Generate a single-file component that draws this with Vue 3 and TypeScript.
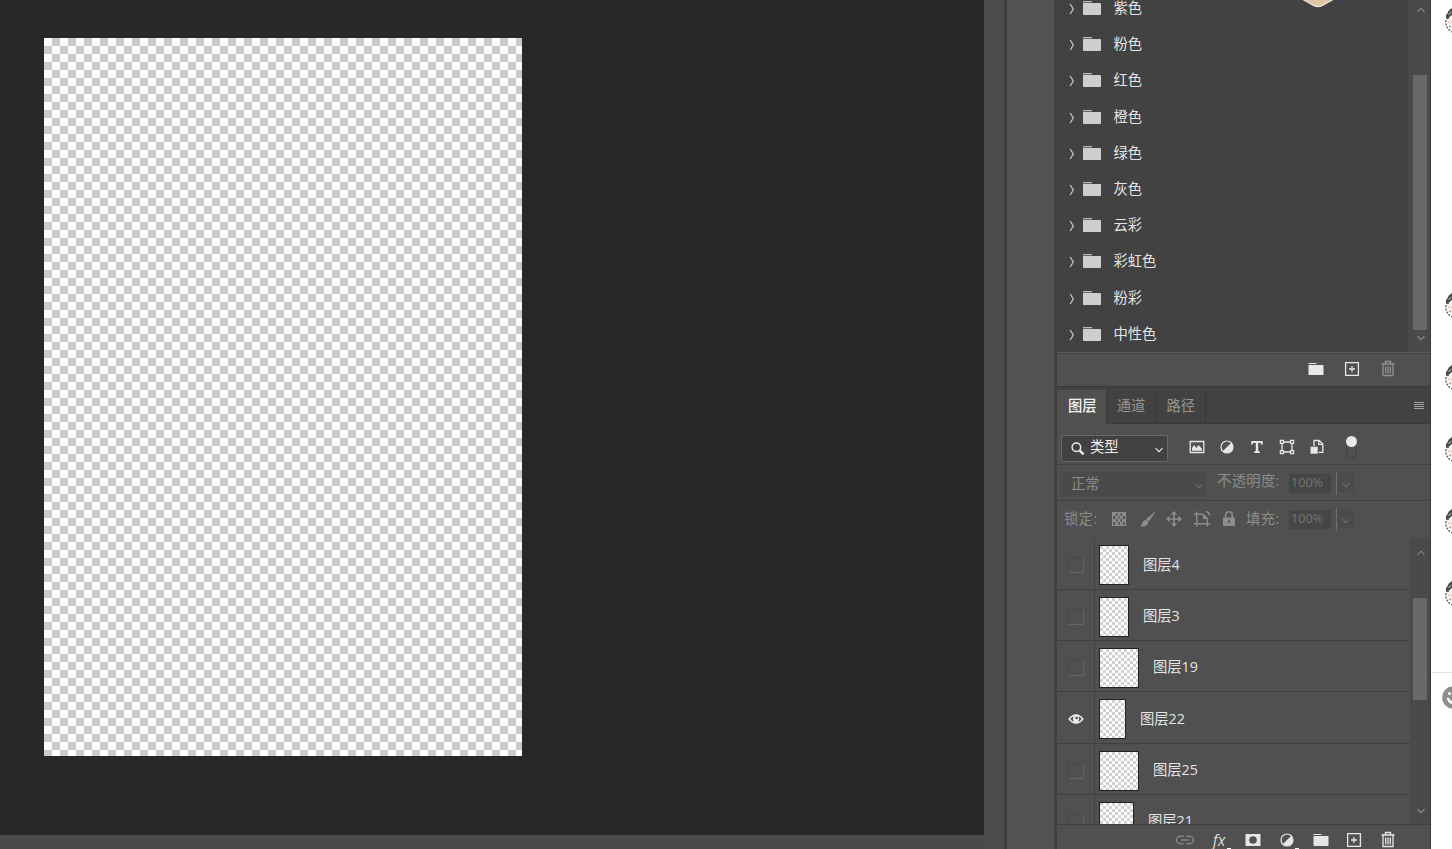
<script setup lang="ts">
interface Layer {
  name: string
  width: number
  visible: boolean
}

const swatchGroups: string[] = ['紫色', '粉色', '红色', '橙色', '绿色', '灰色', '云彩', '彩虹色', '粉彩', '中性色']

const layers: Layer[] = [
  { name: '图层4', width: 30, visible: false },
  { name: '图层3', width: 30, visible: false },
  { name: '图层19', width: 40, visible: false },
  { name: '图层22', width: 27, visible: true },
  { name: '图层25', width: 40, visible: false },
  { name: '图层21', width: 35, visible: false },
]

const filterIcons: string[] = ['image', 'adjust', 'type', 'shape', 'smart']
const layerActions: string[] = ['link', 'fx', 'mask', 'adjust', 'folder', 'plus', 'trash']
const avatars: number[] = [1, 2, 3, 4, 5, 6]
</script>

<template>
  <div class="screen">
    <svg class="defs" aria-hidden="true">
      <symbol id="folder" viewBox="0 0 18 18">
        <path d="M1.5 3h8v1h-8z" fill="currentColor" />
        <path d="M1.5 5h14.2q.8 0 .8.8v8.4q0 .8-.8.8H2.3q-.8 0-.8-.8z" fill="currentColor" />
      </symbol>
      <symbol id="plus" viewBox="0 0 18 18">
        <path d="M2.6 2.6h12.8v12.8H2.6zM9 6v6M6 9h6" fill="none" stroke="currentColor" stroke-width="1.3" />
      </symbol>
      <symbol id="trash" viewBox="0 0 18 18">
        <path d="M2.5 4h13M6.5 3.5v-2h5v2M4 4.5V15.5h10V4.5" fill="none" stroke="currentColor" stroke-width="1.3" />
        <path d="M6.7 6.5v7M9 6.5v7M11.3 6.5v7" stroke="currentColor" stroke-width="1.3" />
      </symbol>
      <symbol id="image" viewBox="0 0 18 18">
        <path d="M2.2 3.5h13.6v11H2.2z" fill="none" stroke="currentColor" stroke-width="1.3" />
        <path d="M4 12.8V10l2.2-3 2 3 2.2-3 3.6 3.8v2z" fill="currentColor" />
      </symbol>
      <symbol id="adjust" viewBox="0 0 18 18">
        <circle cx="9" cy="9" r="6" fill="none" stroke="currentColor" stroke-width="1.2" />
        <path d="M13.3 4.7A6 6 0 1 1 4.7 13.3z" fill="currentColor" />
      </symbol>
      <symbol id="type" viewBox="0 0 18 18">
        <path d="M3.3 3h11.4v3.8h-1.3l-.5-1.9H10.2v8.2l1.7.6v1.3H6.1v-1.3l1.7-.6V4.9H5.1l-.5 1.9H3.3z" fill="currentColor" />
      </symbol>
      <symbol id="shape" viewBox="0 0 18 18">
        <path d="M4 6v6M14 6v6M6 4h6M6 14h6M2.4 2.4h3v3h-3zM12.6 2.4h3v3h-3zM2.4 12.6h3v3h-3zM12.6 12.6h3v3h-3z" fill="none" stroke="currentColor" stroke-width="1.3" />
      </symbol>
      <symbol id="smart" viewBox="0 0 18 18">
        <path d="M6 8V2.5h5.2L14.8 6v8.3H10.5M10.8 2.5v3.8h4" fill="none" stroke="currentColor" stroke-width="1.3" />
        <path d="M2.5 8.7h7.2v7H2.5z" fill="currentColor" />
      </symbol>
      <symbol id="search" viewBox="0 0 18 18">
        <circle cx="7.4" cy="7.2" r="4.3" fill="none" stroke="currentColor" stroke-width="1.5" />
        <path d="M10.6 10.4l4 4" stroke="currentColor" stroke-width="2.4" />
      </symbol>
      <symbol id="checker" viewBox="0 0 18 18">
        <path d="M2.6 2.6h12.8v12.8H2.6z" fill="none" stroke="currentColor" stroke-width="1.3" />
        <path d="M3 3h3v3H3zM12 3h3v3h-3zM7.5 3h3v3h-3zM5.3 6h3v3h-3zM9.8 6h3v3h-3zM3 9h3v3H3zM7.5 8.5h3v3.5h-3zM12 9h3v3h-3zM5.3 12h3v3h-3zM9.8 12h3v3h-3z" fill="currentColor" />
      </symbol>
      <symbol id="brush" viewBox="0 0 18 18">
        <path d="M17.3.8L7 9l2.7 2.7zM6.4 10c1.7.3 2.8 1.4 2.7 3-.2 2.5-3 4-8.1 3.5 2.5-1.2 1.8-5.8 5.4-6.5z" fill="currentColor" />
      </symbol>
      <symbol id="move" viewBox="0 0 18 18">
        <path d="M9 1l3.2 3.6H9.8v3.6h3.6V5.8L17 9l-3.6 3.2V9.8H9.8v3.6h2.4L9 17l-3.2-3.6h2.4V9.8H4.6v2.4L1 9l3.6-3.2v2.4h3.6V4.6H5.8z" fill="currentColor" />
      </symbol>
      <symbol id="artboard" viewBox="0 0 18 18">
        <path d="M3.8 1.5v15M.8 4.3h9.4M.8 13.7h16.4M14.2 8.3v8.2M10.2 4.3l4 4M13 1.5q3 .3 3.8 3.8" fill="none" stroke="currentColor" stroke-width="1.4" />
        <path d="M10 4v5h5z" fill="currentColor" />
      </symbol>
      <symbol id="lock" viewBox="0 0 18 18">
        <path d="M5.7 8V5a3.3 3.3 0 0 1 6.6 0v3" fill="none" stroke="currentColor" stroke-width="1.6" />
        <path fill-rule="evenodd" d="M3 7.5h12V16H3zM8.2 10v3h1.6v-3z" fill="currentColor" />
      </symbol>
      <symbol id="link" viewBox="0 0 18 18">
        <path d="M7.7 5.3H4.2a3.7 3.7 0 0 0 0 7.4h3.5M10.3 5.3h3.5a3.7 3.7 0 0 1 0 7.4h-3.5M5.2 9h7.6" fill="none" stroke="currentColor" stroke-width="1.4" />
      </symbol>
      <symbol id="mask" viewBox="0 0 18 18">
        <path fill-rule="evenodd" d="M1.5 3h15v12h-15zM9 5.2a3.8 3.8 0 1 0 0 7.6a3.8 3.8 0 1 0 0-7.6z" fill="currentColor" />
      </symbol>
      <symbol id="eye" viewBox="0 0 18 18">
        <path fill-rule="evenodd" d="M1.2 9Q4.6 4.2 9 4.2T16.8 9Q13.4 13.8 9 13.8T1.2 9zM3.3 9q1.4 2 3.2 2.8-1.2-2.8 0-5.6Q4.7 7 3.3 9zM14.7 9q-1.4-2-3.2-2.8 1.2 2.8 0 5.6Q13.3 11 14.7 9z" fill="currentColor" />
        <circle cx="9.6" cy="8" r="1.3" fill="#505050" />
      </symbol>
      <symbol id="down" viewBox="0 0 10 10">
        <path d="M1.5 3.2L5 6.7l3.5-3.5" fill="none" stroke="currentColor" stroke-width="1.1" />
      </symbol>
      <symbol id="up" viewBox="0 0 10 10">
        <path d="M1.5 6.7L5 3.2l3.5 3.5" fill="none" stroke="currentColor" stroke-width="1.1" />
      </symbol>
    </svg>

    <main class="workspace">
      <div class="pasteboard"><div class="document"></div></div>
      <div class="hscroll"></div>
    </main>
    <div class="vscroll"></div>
    <div class="dock"></div>

    <aside class="panels">
      <section class="swatches">
        <ul class="groups">
          <li v-for="group in swatchGroups" :key="group" class="group">
            <svg class="chevron" viewBox="0 0 6 12"><path d="M1.2 1L4.3 6 1.2 11" fill="none" stroke="currentColor" stroke-width="1.3" /></svg>
            <svg class="group-folder" viewBox="0 0 18 14">
              <path d="M0 0h9v1.3H0z" fill="#bcbcbc" />
              <path d="M0 2h17.2q.8 0 .8.8v10.4q0 .8-.8.8H.8q-.8 0-.8-.8z" fill="#cecece" />
            </svg>
            <span>{{ group }}</span>
          </li>
        </ul>
        <div class="track">
          <svg class="arrow"><use href="#up" /></svg>
          <div class="thumb swatch-thumb"></div>
          <svg class="arrow"><use href="#down" /></svg>
        </div>
        <svg class="badge" viewBox="0 0 34 9">
          <path d="M1 0L13 6.6q4 2 8 0L33 0z" fill="#dcc6a4" stroke="#efe4d2" stroke-width="1.2" />
        </svg>
      </section>

      <div class="swatch-actions">
        <span class="cell"><svg class="icon"><use href="#folder" /></svg></span>
        <span class="cell"><svg class="icon"><use href="#plus" /></svg></span>
        <span class="cell dim"><svg class="icon"><use href="#trash" /></svg></span>
      </div>

      <nav class="tabs">
        <span class="tab active">图层</span>
        <span class="tab">通道</span>
        <span class="tab">路径</span>
        <span class="menu"></span>
      </nav>

      <div class="filter">
        <div class="kind">
          <svg class="icon search"><use href="#search" /></svg>
          <span>类型</span>
          <svg class="caret"><use href="#down" /></svg>
        </div>
        <div class="kinds">
          <span v-for="icon in filterIcons" :key="icon" class="cell"><svg class="icon"><use :href="'#' + icon" /></svg></span>
        </div>
        <div class="toggle"></div>
      </div>

      <div class="blend">
        <div class="mode"><span>正常</span><svg class="caret"><use href="#down" /></svg></div>
        <span class="label">不透明度:</span>
        <span class="amount">100%</span>
        <span class="drop"><svg class="caret"><use href="#down" /></svg></span>
      </div>

      <div class="locks">
        <span class="label lock-label">锁定:</span>
        <svg class="icon lock-checker"><use href="#checker" /></svg>
        <svg class="icon lock-brush"><use href="#brush" /></svg>
        <svg class="icon lock-move"><use href="#move" /></svg>
        <svg class="icon lock-artboard"><use href="#artboard" /></svg>
        <svg class="icon lock-all"><use href="#lock" /></svg>
        <span class="label fill-label">填充:</span>
        <span class="amount">100%</span>
        <span class="drop"><svg class="caret"><use href="#down" /></svg></span>
      </div>

      <section class="layers">
        <ul class="rows">
          <li v-for="layer in layers" :key="layer.name" class="row">
            <span class="vis">
              <svg v-if="layer.visible" class="icon eye"><use href="#eye" /></svg>
              <span v-else class="box"></span>
            </span>
            <span class="preview" :style="{ width: layer.width + 'px' }"></span>
            <span class="name">{{ layer.name }}</span>
          </li>
        </ul>
        <div class="track layer-track">
          <svg class="arrow"><use href="#up" /></svg>
          <div class="thumb layer-thumb"></div>
          <svg class="arrow last"><use href="#down" /></svg>
        </div>
      </section>

      <footer class="layer-actions">
        <span v-for="action in layerActions" :key="action" class="cell" :class="action">
          <span v-if="action === 'fx'" class="fx-text">fx</span>
          <svg v-else class="icon"><use :href="'#' + action" /></svg>
        </span>
      </footer>
    </aside>

    <div class="chat">
      <svg v-for="avatar in avatars" :key="avatar" class="avatar" viewBox="0 0 7 26">
        <path d="M7 1Q3 3 2.2 7L1 7.5v4l2.2 1L4.6 10 7 8z" fill="#4e4e4e" />
        <path d="M3.6 8l2.6-3" stroke="#c4c4c4" />
        <path d="M3 12l4-1v11Q2 18 3 12z" fill="#f5eee9" />
        <path d="M1 13q-1 8 6 12" fill="none" stroke="#666" stroke-width="1.4" stroke-dasharray="2 1.3" />
        <path d="M3 15h4" stroke="#dfb5a0" stroke-dasharray="1.5 1" />
        <path d="M4 19l2 1" stroke="#777" />
      </svg>
      <div class="compose">
        <svg class="smile" viewBox="0 0 10 23">
          <circle cx="11.5" cy="11.5" r="11.3" fill="#8f8f8f" />
          <circle cx="7.5" cy="7.5" r="1.5" fill="#fff" />
          <path d="M4.8 12q.7 5 5.2 6v-3q-2.5-.5-3-3z" fill="#fff" />
        </svg>
      </div>
    </div>
  </div>
</template>

<style>
body {
  margin: 0;
  overflow: hidden;
}
</style>

<style scoped>
* {
  box-sizing: border-box;
}
.screen {
  position: relative;
  display: flex;
  width: 1452px;
  height: 849px;
  overflow: hidden;
  background: #505050;
  color: #e4e4e4;
  font-family: "Open Sans", "Noto Sans CJK SC", sans-serif;
  font-size: 14.3px;
  font-weight: 400;
  line-height: 20px;
}
.defs {
  position: absolute;
  width: 0;
  height: 0;
}
svg {
  display: block;
  flex: none;
}
ul {
  margin: 0;
  padding: 0;
  list-style: none;
}
.icon {
  width: 18px;
  height: 18px;
}
.caret {
  width: 10px;
  height: 10px;
}
.cell {
  display: flex;
  flex: none;
  align-items: center;
  justify-content: center;
}

.workspace {
  width: 984px;
  flex: none;
}
.pasteboard {
  height: 835px;
  padding: 38px 0 0 44px;
  background: #282828;
}
.document {
  width: 478px;
  height: 718px;
  background: conic-gradient(#fff 25%, #cbcbcb 0 50%, #fff 0 75%, #cbcbcb 0) 8px 0 / 16px 16px;
}
.hscroll {
  height: 14px;
  background: #4a4a4a;
}
.vscroll {
  width: 23px;
  flex: none;
  background: #4b4b4b;
  border-right: 3px solid #3e3e3e;
}
.dock {
  width: 50px;
  flex: none;
  background: #525252;
  border-right: 3px solid #414141;
}
.panels {
  display: flex;
  width: 374px;
  flex: none;
  flex-direction: column;
  border-right: 1px solid #3a3a3a;
}

.swatches {
  position: relative;
  display: flex;
  height: 352px;
  flex: none;
  overflow: hidden;
}
.groups {
  width: 351px;
  margin-top: -10px;
  background: #424242;
}
.group {
  display: flex;
  height: 36.2px;
  padding-left: 12px;
  align-items: center;
}
.group span {
  padding-left: 0.5px;
}
.chevron {
  width: 6px;
  height: 12px;
  margin: 2px 8px 0 0;
  color: #c4c4c4;
}
.group-folder {
  width: 18px;
  height: 14px;
  margin-right: 12px;
}
.badge {
  position: absolute;
  top: -1px;
  left: 244px;
  width: 34px;
  height: 9px;
}
.track {
  display: flex;
  width: 22px;
  padding: 5px 0 0 5px;
  flex-direction: column;
  background: #4a4a4a;
  color: #8c8c8c;
}
.arrow {
  width: 10px;
  height: 10px;
  margin-left: 3px;
}
.thumb {
  width: 14px;
  background: #696968;
  border-radius: 1px;
}
.swatch-thumb {
  height: 255px;
  margin: 60px 0 3px;
}
.swatch-actions {
  display: flex;
  height: 34px;
  flex: none;
  padding: 0 0 2px 240.5px;
  border-top: 1px solid #5b5b5b;
  color: #e8e8e8;
  box-shadow: inset 0 1px #454545;
}
.swatch-actions .cell {
  width: 36px;
}
.swatch-actions .dim {
  color: #929292;
}

.tabs {
  display: flex;
  height: 38px;
  flex: none;
  padding-top: 3px;
  background: #424242;
  border-top: 1px solid #383838;
  border-bottom: 1px solid #3a3a3a;
  color: #959595;
}
.tab {
  width: 49.7px;
  padding-top: 6px;
  border-right: 1px solid #393939;
  text-align: center;
}
.tab.active {
  height: 35px;
  padding-left: 2px;
  background: #505050;
  color: #f2f2f2;
  font-weight: 500;
}
.menu {
  width: 10px;
  height: 7px;
  margin: 12px 6px 0 auto;
  background: repeating-linear-gradient(#a0a0a0 0 1px, transparent 1px 2px);
}

.filter {
  display: flex;
  height: 41px;
  flex: none;
  border-bottom: 1px solid #424242;
}
.kind {
  display: flex;
  width: 107px;
  height: 27px;
  margin: 11px 0 0 4px;
  padding: 0 3px 0 7px;
  align-items: center;
  background: #424242;
  border: 1px solid #686868;
  border-radius: 2px;
  color: #ededed;
}
.kind span {
  margin: -3px auto 0 3px;
}
.kind .caret {
  margin-top: 2px;
}
.kinds {
  display: flex;
  height: 30px;
  margin: 8px 0 0 13.5px;
  color: #e6e6e6;
}
.kinds .cell {
  width: 30.2px;
}
.toggle {
  width: 11px;
  height: 23px;
  margin: 12px 0 0 13.5px;
  border: 1px solid #424242;
  border-top: 0;
  border-radius: 6px;
}
.toggle::before {
  display: block;
  width: 11px;
  height: 11px;
  margin-left: -1px;
  background: #e8e8e8;
  border-radius: 50%;
  content: "";
}

.blend {
  display: flex;
  height: 36px;
  flex: none;
  border-bottom: 1px solid #424242;
  color: #8c8c8c;
}
.mode {
  display: flex;
  width: 144px;
  height: 25px;
  margin: 7px 0 0 5px;
  padding: 0 2px 2px 9px;
  align-items: center;
  justify-content: space-between;
  background: #4a4a4a;
  border-radius: 2px;
}
.mode .caret,
.drop .caret {
  margin-top: 4px;
  color: #6e6e6e;
}
.label {
  white-space: nowrap;
}
.blend .label {
  width: 83px;
  margin-top: 6px;
  padding-left: 11px;
  letter-spacing: 0.35px;
}
.amount {
  width: 42px;
  height: 19px;
  margin-top: 8.5px;
  padding-left: 2px;
  background: #464646;
  color: #757575;
  font-size: 12.6px;
  line-height: 18px;
}
.drop {
  display: flex;
  width: 18px;
  height: 23px;
  margin: 7px 0 0 5px;
  align-items: center;
  justify-content: center;
  border-left: 1px solid #707070;
  background: linear-gradient(#4b4b4b, #4b4b4b) 0 1px / 100% 19px no-repeat;
}
.drop .caret {
  margin-top: 2px;
}
.locks {
  display: flex;
  height: 37px;
  flex: none;
  color: #8c8c8c;
}
.locks .icon {
  margin-top: 9px;
}
.lock-label {
  width: 46px;
  margin-top: 8px;
  padding-left: 7px;
  letter-spacing: 0.5px;
}
.locks .lock-checker {
  margin-left: 7px;
}
.locks .lock-brush {
  margin-left: 11px;
}
.locks .lock-move {
  margin-left: 8px;
}
.locks .lock-artboard {
  margin-left: 10px;
}
.locks .lock-all {
  margin-left: 9px;
}
.fill-label {
  width: 43px;
  margin: 8px 0 0 8px;
  letter-spacing: 0.5px;
}

.layers {
  display: flex;
  height: 286px;
  flex: none;
  overflow: hidden;
}
.rows {
  width: 353px;
  flex: none;
}
.row {
  display: flex;
  height: 51.3px;
  border-bottom: 1px solid #404040;
}
.row:first-child {
  height: 51.7px;
}
.vis {
  width: 38px;
  flex: none;
  padding: 19px 0 0 11px;
  border-right: 1px solid #414141;
}
.box {
  display: block;
  width: 16px;
  height: 16px;
  border: 1px solid #474747;
  border-right-color: #646464;
  border-bottom-color: #646464;
}
.eye {
  margin: -1px 0 0 -1px;
  color: #ededed;
}
.preview {
  height: 40px;
  flex: none;
  margin: 7px 14px 0 4px;
  border: 1px solid #222;
  background: conic-gradient(#fff 25%, #d2d2d2 0 50%, #fff 0 75%, #d2d2d2 0) 0 0 / 6px 6px;
}
.name {
  padding-top: 16.5px;
}
.layer-track {
  width: 20px;
  padding: 10px 0 0 3px;
}
.layer-thumb {
  height: 102px;
  margin-top: 40px;
}
.arrow.last {
  margin-top: 106px;
}
.layer-actions {
  display: flex;
  height: 25px;
  flex: none;
  padding: 6px 0 0 111.5px;
  border-top: 1px solid #3f3f3f;
  color: #e6e6e6;
}
.layer-actions .cell {
  width: 33.8px;
  height: 18px;
}
.layer-actions .fx,
.layer-actions .adjust {
  position: relative;
}
.layer-actions .fx::after,
.layer-actions .adjust::after {
  position: absolute;
  right: 5px;
  bottom: 0;
  width: 4px;
  height: 1px;
  background: #fff;
  content: "";
}
.layer-actions .link {
  color: #858585;
}
.fx-text {
  font-size: 16px;
  font-style: italic;
  line-height: 18px;
  color: #d8d8d8;
}

.chat {
  width: 21px;
  flex: none;
  background: #fff;
}
.avatar {
  width: 7px;
  height: 26px;
  margin: 46px 0 0 14px;
}
.avatar:first-child {
  margin-top: 7px;
}
.avatar:nth-child(2) {
  margin-top: 259px;
}
.compose {
  margin-top: 66px;
  padding: 13px 0 0 11px;
  border-top: 1px solid #e4e4e4;
}
.smile {
  width: 10px;
  height: 23px;
}
</style>
